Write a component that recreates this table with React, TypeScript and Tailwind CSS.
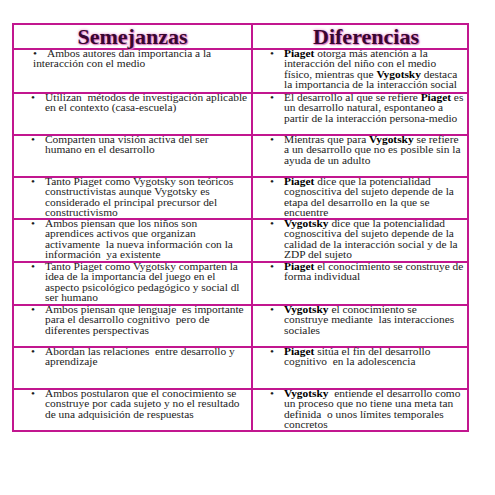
import React from 'react';

type Line = (string | { b: string })[];

interface Row {
  h: string;
  left: Line[];
  right: Line[];
  flat?: boolean;
}

const rows: Row[] = [
  {
    h: 'h-[44px]',
    flat: true,
    left: [['Ambos autores dan importancia a la'], ['interacción con el medio']],
    right: [
      [{ b: 'Piaget' }, ' otorga más atención a la'],
      ['interacción del niño con el medio'],
      ['físico, mientras que ', { b: 'Vygotsky' }, ' destaca'],
      ['la importancia de la interacción social'],
    ],
  },
  {
    h: 'h-[42px]',
    left: [['Utilizan  métodos de investigación aplicable'], ['en el contexto (casa-escuela)']],
    right: [
      ['El desarrollo al que se refiere ', { b: 'Piaget' }, ' es'],
      ['un desarrollo natural, espontaneo a'],
      ['partir de la interacción persona-medio'],
    ],
  },
  {
    h: 'h-[42px]',
    left: [['Comparten una visión activa del ser'], ['humano en el desarrollo']],
    right: [
      ['Mientras que para ', { b: 'Vygotsky' }, ' se refiere'],
      ['a un desarrollo que no es posible sin la'],
      ['ayuda de un adulto'],
    ],
  },
  {
    h: 'h-[42px]',
    left: [
      ['Tanto Piaget como Vygotsky son teóricos'],
      ['constructivistas aunque Vygotsky es'],
      ['considerado el principal precursor del'],
      ['constructivismo'],
    ],
    right: [
      [{ b: 'Piaget' }, ' dice que la potencialidad'],
      ['cognoscitiva del sujeto depende de la'],
      ['etapa del desarrollo en la que se'],
      ['encuentre'],
    ],
  },
  {
    h: 'h-[43px]',
    left: [
      ['Ambos piensan que los niños son'],
      ['aprendices activos que organizan'],
      ['activamente  la nueva información con la'],
      ['información  ya existente'],
    ],
    right: [
      [{ b: 'Vygotsky' }, ' dice que la potencialidad'],
      ['cognoscitiva del sujeto depende de la'],
      ['calidad de la interacción social y de la'],
      ['ZDP del sujeto'],
    ],
  },
  {
    h: 'h-[43px]',
    left: [
      ['Tanto Piaget como Vygotsky comparten la'],
      ['idea de la importancia del juego en el'],
      ['aspecto psicológico pedagógico y social dl'],
      ['ser humano'],
    ],
    right: [[{ b: 'Piaget' }, ' el conocimiento se construye de'], ['forma individual']],
  },
  {
    h: 'h-[42px]',
    left: [
      ['Ambos piensan que lenguaje  es importante'],
      ['para el desarrollo cognitivo  pero de'],
      ['diferentes perspectivas'],
    ],
    right: [
      [{ b: 'Vygotsky' }, ' el conocimiento se'],
      ['construye mediante  las interacciones'],
      ['sociales'],
    ],
  },
  {
    h: 'h-[42px]',
    left: [['Abordan las relaciones  entre desarrollo y'], ['aprendizaje']],
    right: [[{ b: 'Piaget' }, ' sitúa el fin del desarrollo'], ['cognitivo  en la adolescencia']],
  },
  {
    h: 'h-[40px]',
    left: [
      ['Ambos postularon que el conocimiento se'],
      ['construye por cada sujeto y no el resultado'],
      ['de una adquisición de respuestas'],
    ],
    right: [
      [{ b: 'Vygotsky' }, '  entiende el desarrollo como'],
      ['un proceso que no tiene una meta tan'],
      ['definida  o unos límites temporales'],
      ['concretos'],
    ],
  },
];

function Text({ line }: { line: Line }) {
  return (
    <>
      {line.map((part, i) =>
        typeof part === 'string' ? (
          <span key={i}>{part}</span>
        ) : (
          <b key={i} className="font-bold text-black">
            {part.b}
          </b>
        )
      )}
    </>
  );
}

function Bullets({ lines }: { lines: Line[] }) {
  return (
    <div className="flex pl-[17px] -mt-[2px]">
      <span className="w-[14px] shrink-0 h-[10px]">•</span>
      <div className="flex flex-col">
        {lines.map((l, i) => (
          <div key={i} className="whitespace-pre h-[10.3px]">
            <Text line={l} />
          </div>
        ))}
      </div>
    </div>
  );
}

function Flat({ lines }: { lines: Line[] }) {
  return (
    <div className="pl-[19px] -mt-[2px] flex flex-col">
      {lines.map((l, i) => (
        <div key={i} className="whitespace-pre h-[10.3px]">
          {i === 0 && <span className="inline-block w-[14px]">•</span>}
          <Text line={l} />
        </div>
      ))}
    </div>
  );
}

export default function App() {
  return (
    <div className="w-[495px] h-[495px] bg-white pt-[23px] pl-[12px] font-['Liberation_Serif',serif] text-[11.4px] leading-[10.3px] text-[#1c1c1c]">
      <div className="w-[457px] border-2 border-[#c2168f] flex flex-col">
        <div className="h-[25px] flex border-b-2 border-[#c2168f]">
          <div className="w-[239px] border-r-2 border-[#c2168f] flex items-center justify-center">
            <span className="text-[22px] font-bold leading-none text-[#380630] [text-shadow:0_0_3px_#e27bc6,1px_1px_1px_#e27bc6]">
              Semejanzas
            </span>
          </div>
          <div className="flex-1 flex items-center justify-center pl-[12px]">
            <span className="text-[22px] font-bold leading-none text-[#380630] [text-shadow:0_0_3px_#e27bc6,1px_1px_1px_#e27bc6]">
              Diferencias
            </span>
          </div>
        </div>
        {rows.map((r, i) => (
          <div
            key={i}
            className={`${r.h} flex ${i < rows.length - 1 ? 'border-b-2 border-[#c2168f]' : ''}`}
          >
            <div className="w-[239px] border-r-2 border-[#c2168f]">
              {r.flat ? <Flat lines={r.left} /> : <Bullets lines={r.left} />}
            </div>
            <div className="flex-1">
              <Bullets lines={r.right} />
            </div>
          </div>
        ))}
      </div>
    </div>
  );
}
